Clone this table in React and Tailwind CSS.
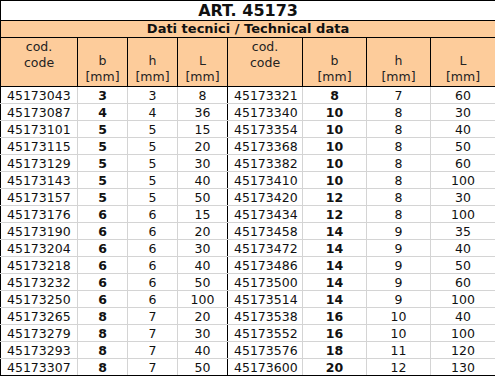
import React from "react";

const left = [
  ["45173043", "3", "3", "8"],
  ["45173087", "4", "4", "36"],
  ["45173101", "5", "5", "15"],
  ["45173115", "5", "5", "20"],
  ["45173129", "5", "5", "30"],
  ["45173143", "5", "5", "40"],
  ["45173157", "5", "5", "50"],
  ["45173176", "6", "6", "15"],
  ["45173190", "6", "6", "20"],
  ["45173204", "6", "6", "30"],
  ["45173218", "6", "6", "40"],
  ["45173232", "6", "6", "50"],
  ["45173250", "6", "6", "100"],
  ["45173265", "8", "7", "20"],
  ["45173279", "8", "7", "30"],
  ["45173293", "8", "7", "40"],
  ["45173307", "8", "7", "50"],
];

const right = [
  ["45173321", "8", "7", "60"],
  ["45173340", "10", "8", "30"],
  ["45173354", "10", "8", "40"],
  ["45173368", "10", "8", "50"],
  ["45173382", "10", "8", "60"],
  ["45173410", "10", "8", "100"],
  ["45173420", "12", "8", "30"],
  ["45173434", "12", "8", "100"],
  ["45173458", "14", "9", "35"],
  ["45173472", "14", "9", "40"],
  ["45173486", "14", "9", "50"],
  ["45173500", "14", "9", "60"],
  ["45173514", "14", "9", "100"],
  ["45173538", "16", "10", "40"],
  ["45173552", "16", "10", "100"],
  ["45173576", "18", "11", "120"],
  ["45173600", "20", "12", "130"],
];

function HeadCells() {
  return (
    <>
      <th className="border border-black align-top pt-[1px] font-normal leading-[16px]">
        cod.
        <br />
        code
      </th>
      {["b", "h", "L"].map((l) => (
        <th key={l} className="border border-black align-bottom pb-[1px] font-normal leading-[16px]">
          {l}
          <br />
          [mm]
        </th>
      ))}
    </>
  );
}

export default function App() {
  const last = left.length - 1;
  return (
    <div className="w-[495px] bg-white" style={{ fontFamily: '"DejaVu Sans", Verdana, sans-serif' }}>
      <table className="w-[495px] table-fixed border-collapse text-[12.5px] text-[#111]">
        <colgroup>
          <col className="w-[77px]" />
          <col className="w-[50px]" />
          <col className="w-[50px]" />
          <col className="w-[50px]" />
          <col className="w-[75px]" />
          <col className="w-[64px]" />
          <col className="w-[64px]" />
          <col className="w-[65px]" />
        </colgroup>
        <thead>
          <tr className="h-[20px]">
            <th colSpan={8} className="border border-black text-[16px] font-bold leading-[19px] p-0">
              ART. 45173
            </th>
          </tr>
          <tr className="h-[17px] bg-[#fdcc9b]">
            <th colSpan={8} className="border border-black text-[13px] font-bold leading-[16px] p-0">
              Dati tecnici / Technical data
            </th>
          </tr>
          <tr className="h-[49px] bg-[#fdcc9b] text-[#222]">
            <HeadCells />
            <HeadCells />
          </tr>
        </thead>
        <tbody>
          {left.map((r, i) => {
            const q = right[i];
            const b = i === last ? "border-b-black" : "";
            return (
              <tr key={r[0]} className="h-[17px] leading-[15px]">
                <td className={`border border-[#d4d4d4] border-l-black p-0 pl-[6px] ${b}`}>{r[0]}</td>
                <td className={`border border-[#d4d4d4] text-center font-bold p-0 ${b}`}>{r[1]}</td>
                <td className={`border border-[#d4d4d4] text-center p-0 ${b}`}>{r[2]}</td>
                <td className={`border border-[#d4d4d4] border-r-black text-center p-0 ${b}`}>{r[3]}</td>
                <td className={`border border-[#d4d4d4] border-l-black p-0 pl-[6px] ${b}`}>{q[0]}</td>
                <td className={`border border-[#d4d4d4] text-center font-bold p-0 ${b}`}>{q[1]}</td>
                <td className={`border border-[#d4d4d4] text-center p-0 ${b}`}>{q[2]}</td>
                <td className={`border border-[#d4d4d4] border-r-black text-center p-0 ${b}`}>{q[3]}</td>
              </tr>
            );
          })}
        </tbody>
      </table>
    </div>
  );
}
